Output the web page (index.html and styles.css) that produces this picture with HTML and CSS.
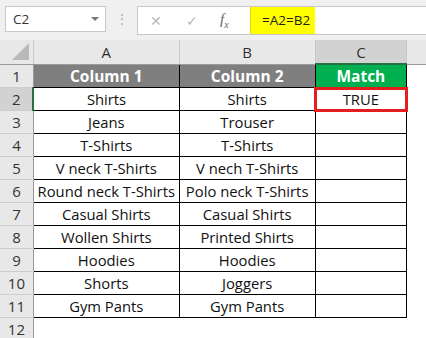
FILE: index.html
```html
<!DOCTYPE html>
<html lang="en">
    <head>
        <meta charset="UTF-8" />
        <title>Match</title>
        <link rel="stylesheet" href="styles.css">
    </head>
    <body>
        <!-- Name box and formula bar -->
        <div class="toolbar">
            <div class="namebox">
                <span>C2</span>
                <span class="arrow"></span>
            </div>
            <div class="grip">⋮</div>
            <div class="formula">
                <div class="buttons">
                    <span class="btn cancel">✕</span>
                    <span class="btn enter">✓</span>
                    <span class="btn fx"><i>f</i><sub>x</sub></span>
                </div>
                <div class="input">=A2=B2</div>
            </div>
        </div>

        <!-- Sheet -->
        <table class="sheet">
            <tr class="colheads">
                <th class="corner"><span class="tri"></span></th>
                <th class="col-a">A</th>
                <th class="col-b">B</th>
                <th class="col-c sel">C</th>
                <th class="rest"></th>
            </tr>
            <tr>
                <th class="rowhead">1</th>
                <td class="cell head">Column 1</td>
                <td class="cell head">Column 2</td>
                <td class="cell head match">Match</td>
                <td></td>
            </tr>
            <tr>
                <th class="rowhead sel">2</th>
                <td class="cell">Shirts</td>
                <td class="cell">Shirts</td>
                <td class="cell active">TRUE</td>
                <td></td>
            </tr>
            <tr><th class="rowhead">3</th><td class="cell">Jeans</td><td class="cell">Trouser</td><td class="cell"></td><td></td></tr>
            <tr><th class="rowhead">4</th><td class="cell">T-Shirts</td><td class="cell">T-Shirts</td><td class="cell"></td><td></td></tr>
            <tr><th class="rowhead">5</th><td class="cell">V neck T-Shirts</td><td class="cell">V nech T-Shirts</td><td class="cell"></td><td></td></tr>
            <tr><th class="rowhead">6</th><td class="cell">Round neck T-Shirts</td><td class="cell">Polo neck T-Shirts</td><td class="cell"></td><td></td></tr>
            <tr><th class="rowhead">7</th><td class="cell">Casual Shirts</td><td class="cell">Casual Shirts</td><td class="cell"></td><td></td></tr>
            <tr><th class="rowhead">8</th><td class="cell">Wollen Shirts</td><td class="cell">Printed Shirts</td><td class="cell"></td><td></td></tr>
            <tr><th class="rowhead">9</th><td class="cell">Hoodies</td><td class="cell">Hoodies</td><td class="cell"></td><td></td></tr>
            <tr><th class="rowhead">10</th><td class="cell">Shorts</td><td class="cell">Joggers</td><td class="cell"></td><td></td></tr>
            <tr><th class="rowhead">11</th><td class="cell">Gym Pants</td><td class="cell">Gym Pants</td><td class="cell"></td><td></td></tr>
            <tr><th class="rowhead">12</th><td></td><td></td><td></td><td></td></tr>
        </table>
    </body>
</html>
```

FILE: styles.css
```css
html {
    background-color: #ffffff;
}

body {
    margin: 0;
    width: 426px;
    height: 338px;
    overflow: hidden;
    font-family: "Open Sans", "Liberation Sans", sans-serif;
    background-color: #ffffff;
}

.toolbar {
    display: flex;
    align-items: flex-start;
    height: 40px;
    padding: 6px 0 0 5px;
    box-sizing: border-box;
    background-color: #f0f0f0;
}

.namebox {
    display: flex;
    align-items: center;
    justify-content: space-between;
    width: 101px;
    height: 26px;
    box-sizing: border-box;
    padding: 0 6px 0 7px;
    border: 1px solid #c8c8c8;
    background-color: #ffffff;
    font-size: 13.5px;
    color: #333333;
}

.arrow {
    width: 0;
    height: 0;
    border-left: 4px solid transparent;
    border-right: 4px solid transparent;
    border-top: 4px solid #777777;
}

.grip {
    width: 31px;
    text-align: center;
    line-height: 26px;
    font-size: 14px;
    color: #b5b5b5;
}

.formula {
    display: flex;
    flex: 1;
    height: 27px;
    border: 1px solid #c8c8c8;
    border-right: none;
    background-color: #ffffff;
}

.buttons {
    display: flex;
    align-items: center;
    width: 112px;
    padding-left: 12px;
    box-sizing: border-box;
}

.btn {
    color: #b9b9b9;
    font-size: 14px;
}

.cancel {
    width: 36px;
}

.enter {
    width: 34px;
}

.fx {
    font-family: "Liberation Serif", serif;
    color: #666666;
    font-size: 15px;
}

.fx sub {
    font-size: 10px;
    font-style: italic;
}

.input {
    width: 65px;
    height: 27px;
    box-sizing: border-box;
    padding-left: 11px;
    line-height: 26px;
    font-size: 13.5px;
    color: #222222;
    background-color: #ffff00;
    border-left: 1px solid #e0d800;
}

.sheet {
    border-collapse: collapse;
    table-layout: fixed;
    font-family: "Open Sans", "Liberation Sans", sans-serif;
}

.colheads th {
    height: 23px;
    padding: 0;
    font-weight: normal;
    font-size: 15px;
    color: #333333;
    background-color: #e8e8e8;
    border-right: 1px solid #c9c9c9;
    border-bottom: 1px solid #9a9a9a;
}

.corner {
    width: 33px;
    position: relative;
}

.tri {
    position: absolute;
    right: 4px;
    bottom: 4px;
    width: 0;
    height: 0;
    border-left: 17px solid transparent;
    border-bottom: 17px solid #b9b9b9;
}

.col-a {
    width: 145px;
}

.col-b {
    width: 135px;
}

.col-c {
    width: 91px;
}

.colheads .rest {
    width: 19px;
    border-right: none;
}

.colheads .sel {
    background-color: #d2d2d2;
    border-bottom: 2px solid #217346;
}

.rowhead {
    height: 22px;
    padding: 0;
    font-weight: normal;
    font-size: 15px;
    color: #333333;
    background-color: #e8e8e8;
    border-bottom: 1px solid #cdcdcd;
    border-right: 1px solid #9a9a9a;
}

.rowhead.sel {
    background-color: #d2d2d2;
    border-right: 2px solid #217346;
}

.cell {
    padding: 0;
    text-align: center;
    font-size: 14.8px;
    line-height: 22px;
    color: #111111;
    border: 1px solid #000000;
    white-space: nowrap;
    overflow: hidden;
}

.head {
    background-color: #7f7f7f;
    color: #ffffff;
    font-weight: bold;
    font-size: 15.5px;
}

.match {
    background-color: #00b050;
}

.active {
    outline: 3px solid #e41e1e;
    outline-offset: -2px;
}
```
